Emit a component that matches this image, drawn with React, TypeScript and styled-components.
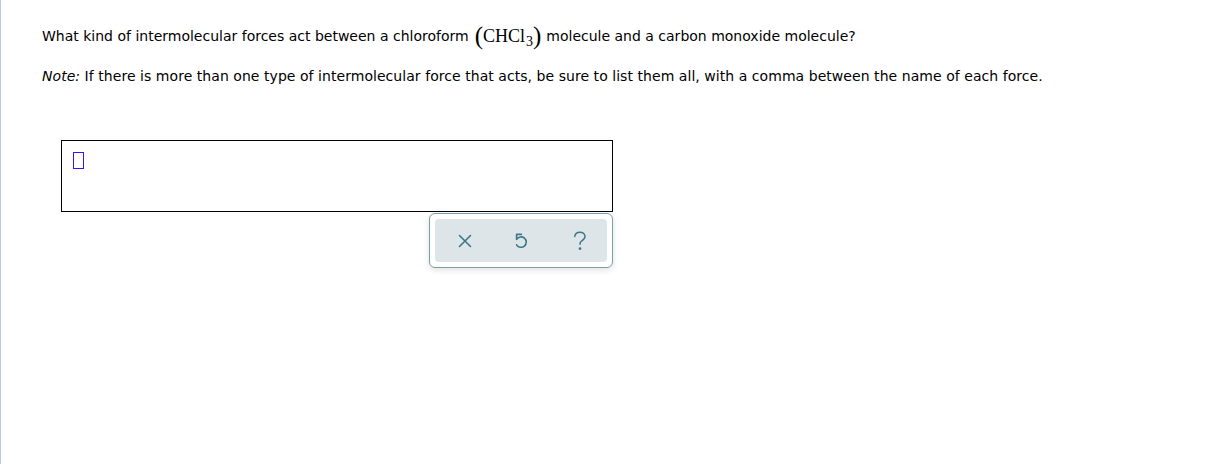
import React from 'react';
import styled, { createGlobalStyle } from 'styled-components';

const GlobalStyle = createGlobalStyle`
  html, body {
    margin: 0;
    padding: 0;
    background: #fff;
  }
  body {
    font-family: "DejaVu Sans", Verdana, sans-serif;
    color: #000;
  }
`;

const Page = styled.div`
  box-sizing: border-box;
  min-height: 464px;
  border-left: 1px solid #b9cdd7;
  padding: 24px 0 0 41px;
`;

const Question = styled.p`
  margin: 0;
  font-size: 14px;
  line-height: 24px;
  height: 24px;
  display: flex;
  align-items: center;
  white-space: nowrap;
`;

const Note = styled.p`
  margin: 16px 0 0 0;
  font-size: 14px;
  line-height: 24px;
  white-space: nowrap;
  letter-spacing: 0.05px;

  em {
    font-style: italic;
  }
`;

const Formula = styled.span`
  display: inline-flex;
  align-items: center;
  font-family: "Liberation Serif", "Times New Roman", serif;
  font-size: 18px;
  margin: 0 5px 0 6px;
  line-height: 1;
`;

const Paren = styled.span`
  font-size: 25px;
  position: relative;
  top: -1px;
`;

const Sub = styled.span`
  font-size: 14px;
  position: relative;
  top: 6px;
  margin-left: 1px;
`;

const AnswerArea = styled.div`
  margin: 52px 0 0 19px;
  width: 552px;
  display: flex;
  flex-direction: column;
`;

const InputBox = styled.div`
  box-sizing: border-box;
  height: 72px;
  border: 1px solid #000;
  padding: 11px 0 0 11px;
`;

const Caret = styled.div`
  box-sizing: border-box;
  width: 11px;
  height: 17px;
  border: 1.5px solid #3a10ff;
`;

const Toolbar = styled.div`
  box-sizing: border-box;
  align-self: flex-end;
  margin: 1px 0 0 0;
  width: 184px;
  height: 55px;
  padding: 5px;
  background: #fff;
  border: 1px solid #7d9ea9;
  border-radius: 6px;
  box-shadow: 0 2px 6px rgba(0, 0, 0, 0.12);
`;

const ToolInner = styled.div`
  height: 100%;
  background: #dee5e8;
  border-radius: 4px;
  display: grid;
  grid-template-columns: 58px 56px 58px;
  align-items: center;
  justify-items: center;
`;

const ToolButton = styled.button<{ $shift?: number }>`
  border: none;
  background: transparent;
  padding: 0 0 0 ${({ $shift }) => $shift || 0}px;
  display: flex;
  align-items: center;
  justify-content: center;
  color: #3a7889;
  cursor: pointer;
`;

const App = () => {
  return (
    <Page>
      <GlobalStyle />
      <Question>
        What kind of intermolecular forces act between a chloroform
        <Formula>
          <Paren>(</Paren>
          CHCl
          <Sub>3</Sub>
          <Paren>)</Paren>
        </Formula>
        molecule and a carbon monoxide molecule?
      </Question>
      <Note>
        <em>Note:</em> If there is more than one type of intermolecular force that acts, be sure to list them all, with a comma between the name of each force.
      </Note>
      <AnswerArea>
        <InputBox>
          <Caret />
        </InputBox>
        <Toolbar>
          <ToolInner>
            <ToolButton aria-label="clear" $shift={1}>
              <svg width="14" height="14" viewBox="0 0 14 14" fill="none" stroke="currentColor" strokeWidth="1.6" strokeLinecap="round">
                <path d="M1.5 1.5 L12.5 12.5 M12.5 1.5 L1.5 12.5" />
              </svg>
            </ToolButton>
            <ToolButton aria-label="undo">
              <svg width="16" height="17" viewBox="0 0 16 17" fill="none" stroke="currentColor" strokeWidth="1.6" strokeLinecap="round" strokeLinejoin="round">
                <path d="M8.4 2.4 H3.6 V7.4 A5.2 5.2 0 1 1 3.6 12.8" />
              </svg>
            </ToolButton>
            <ToolButton aria-label="help" $shift={4}>
              <svg width="14" height="20" viewBox="0 0 14 20" fill="none" stroke="currentColor" strokeWidth="1.5" strokeLinecap="round">
                <path d="M1.8 5.5 C1.8 2.8 4 1.2 6.8 1.2 C9.8 1.2 12 3 12 5.6 C12 8 10.2 9 8.6 10 C7.4 10.8 7 11.5 7 13.2" />
                <circle cx="7" cy="17.6" r="0.7" fill="currentColor" />
              </svg>
            </ToolButton>
          </ToolInner>
        </Toolbar>
      </AnswerArea>
    </Page>
  );
};

export default App;
